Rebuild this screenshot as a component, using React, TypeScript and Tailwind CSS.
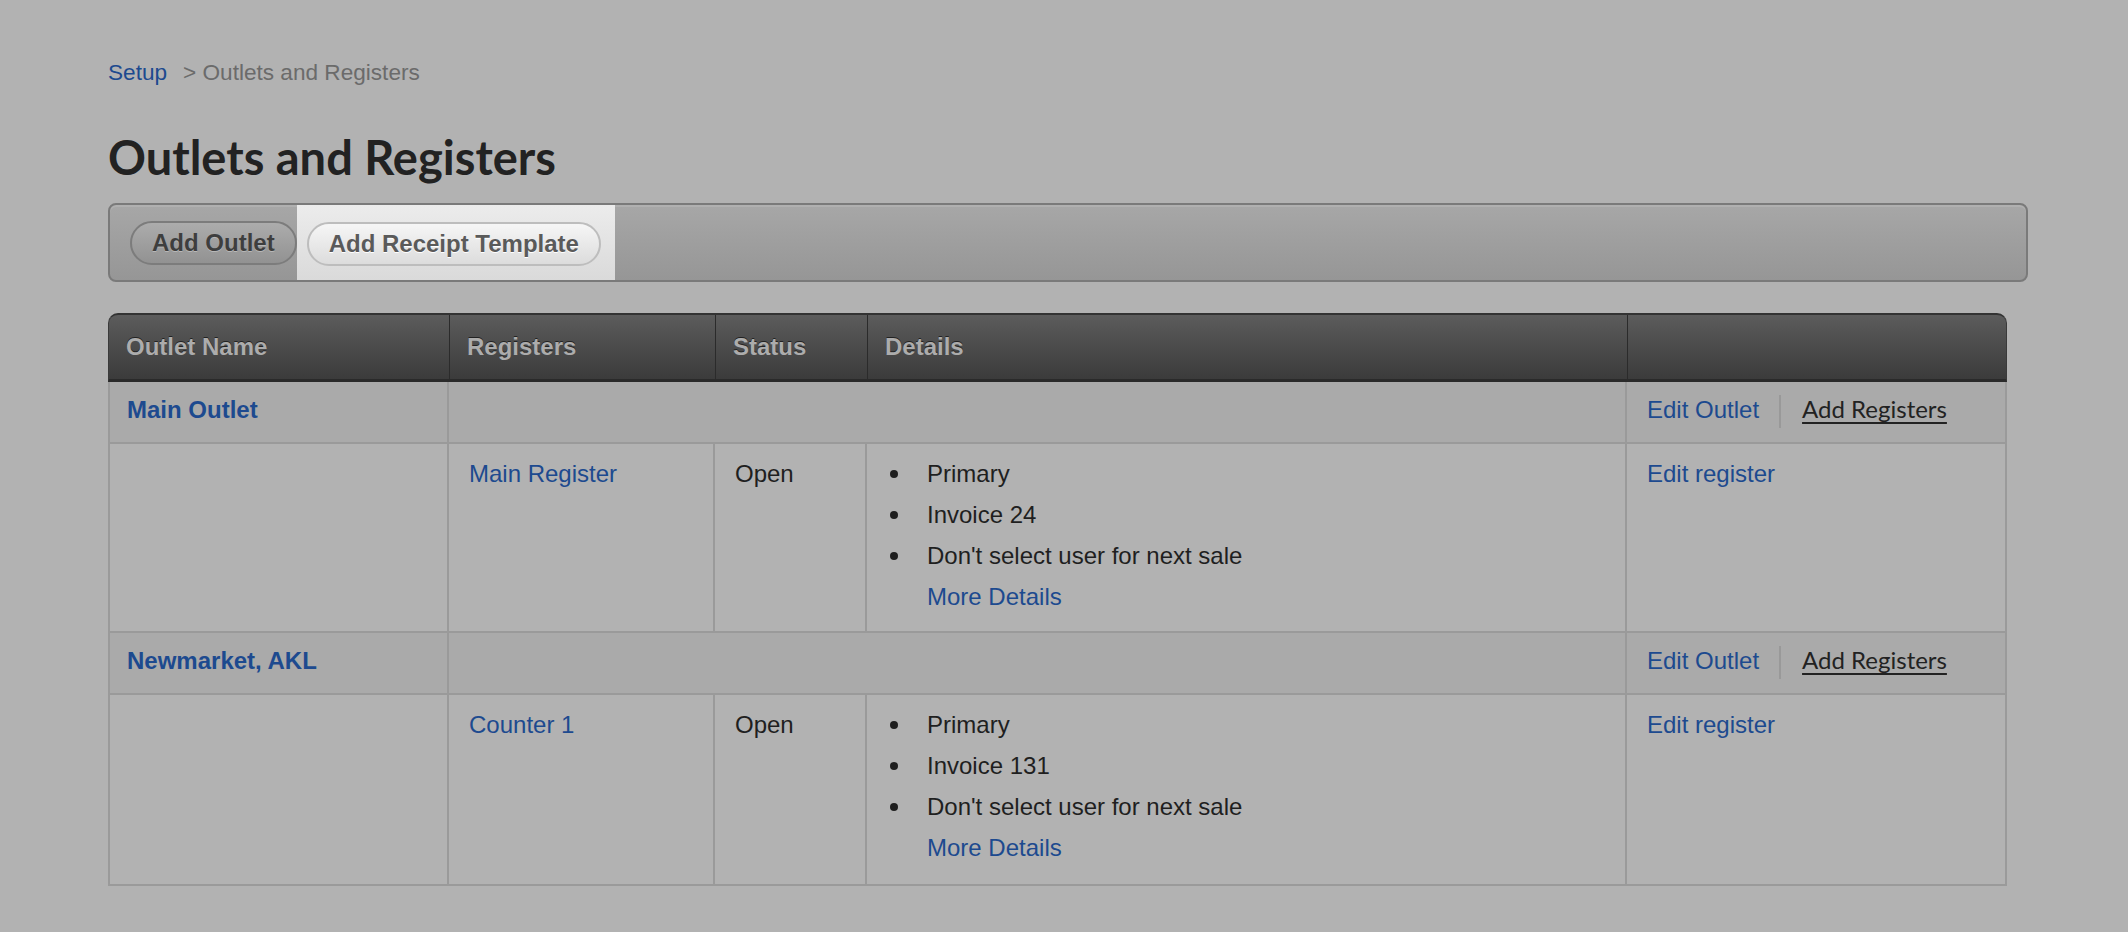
import React from 'react';

const sans = { fontFamily: '"Liberation Sans", Arial, sans-serif' };

type Register = {
  name: string;
  status: string;
  details: string[];
};

type Outlet = {
  name: string;
  registers: Register[];
};

const outlets: Outlet[] = [
  {
    name: 'Main Outlet',
    registers: [
      { name: 'Main Register', status: 'Open', details: ['Primary', 'Invoice 24', "Don't select user for next sale"] },
    ],
  },
  {
    name: 'Newmarket, AKL',
    registers: [
      { name: 'Counter 1', status: 'Open', details: ['Primary', 'Invoice 131', "Don't select user for next sale"] },
    ],
  },
];

const cols = 'grid grid-cols-[339px_266px_152px_760px_378px]';

function OutletRow({ outlet }: { outlet: Outlet }) {
  return (
    <>
      {/* outlet line */}
      <div className={`${cols} bg-[#aaaaaa] border-b-2 border-[#9a9a9a] h-[62px]`}>
        <div className="border-r-2 border-[#9a9a9a] pl-[17px] pt-[7px] leading-[41px] text-[24px] font-bold text-[#1d4a8f]">
          {outlet.name}
        </div>
        <div className="col-span-3 border-r-2 border-[#9a9a9a]" />
        <div className="flex items-start pl-[20px] pt-[7px]">
          <a className="leading-[41px] text-[24px] text-[#1d4a8f]">Edit Outlet</a>
          <span className="ml-[20px] mr-[21px] mt-[6px] h-[33px] w-[2px] bg-[#999999]" />
          <a
            className="leading-[40px] text-[24px] text-[#222] underline underline-offset-[4px]"
            style={{ fontFamily: 'Lato, sans-serif' }}
          >
            Add Registers
          </a>
        </div>
      </div>

      {/* registers */}
      {outlet.registers.map((r) => (
        <div key={r.name} className={`${cols} bg-[#b2b2b2] border-b-2 border-[#9a9a9a] last:border-b-0 h-[189px]`}>
          <div className="border-r-2 border-[#9a9a9a]" />
          <div className="border-r-2 border-[#9a9a9a] pl-[20px] pt-[9px] leading-[41px] text-[24px] text-[#1d4a8f]">
            {r.name}
          </div>
          <div className="border-r-2 border-[#9a9a9a] pl-[20px] pt-[9px] leading-[41px] text-[24px] text-[#1f1f1f]">
            {r.status}
          </div>
          <div className="border-r-2 border-[#9a9a9a] pt-[9px] text-[24px] leading-[41px] text-[#1f1f1f]">
            <ul>
              {r.details.map((d) => (
                <li key={d} className="flex items-center">
                  <span className="ml-[23px] mr-[29px] h-[8px] w-[8px] rounded-full bg-[#1f1f1f]" />
                  {d}
                </li>
              ))}
            </ul>
            <a className="block pl-[60px] text-[#1d4a8f]">More Details</a>
          </div>
          <div className="pl-[20px] pt-[9px] leading-[41px] text-[24px] text-[#1d4a8f]">
            Edit register
          </div>
        </div>
      ))}
    </>
  );
}

export default function App() {
  return (
    <div className="min-h-[932px] bg-[#b2b2b2] pl-[108px] pt-[60px]" style={sans}>
      {/* breadcrumb */}
      <div className="flex items-center gap-[16px] text-[22.6px] leading-[26px]">
        <a className="text-[#1d4a8f]">Setup</a>
        <span className="text-[#6b6b6b]">&gt; Outlets and Registers</span>
      </div>

      <h1
        className="mt-[45px] text-[47px] font-bold leading-[52px] text-[#222]"
        style={{ fontFamily: 'Lato, sans-serif' }}
      >
        Outlets and Registers
      </h1>

      {/* toolbar */}
      <div className="mt-[20px] flex h-[79px] w-[1920px] items-stretch rounded-[8px] border-2 border-[#7a7a7a] bg-gradient-to-b from-[#a7a7a7] to-[#969696] shadow-[inset_0_2px_0_#b0b0b0]">
        <div className="flex items-center pl-[20px]">
          <button className="h-[44px] rounded-full border-2 border-[#7c7c7c] bg-gradient-to-b from-[#acacac] to-[#929292] px-[20px] text-[24px] font-bold text-[#3e3e3e] [text-shadow:0_1px_0_#b8b8b8]">
            Add Outlet
          </button>
        </div>
        <div className="flex items-center bg-gradient-to-b from-[#ececec] to-[#dadada] pl-[10px] pr-[14px] pt-[2px]">
          <button className="h-[44px] rounded-full border-2 border-[#bdbdbd] bg-gradient-to-b from-[#f6f6f6] to-[#dcdcdc] px-[20px] text-[24px] font-bold text-[#5a5a5a] [text-shadow:0_1px_0_#ffffff]">
            Add Receipt Template
          </button>
        </div>
      </div>

      {/* table */}
      <div className="mt-[31px] w-[1899px]">
        <div className="flex h-[69px] rounded-t-[10px] border-t-2 border-b-[3px] border-x border-t-[#333] border-b-[#2a2a2a] border-x-[#3a3a3a] bg-gradient-to-b from-[#5c5c5c] to-[#3b3b3b] text-[24px] font-bold text-[#acacac] [text-shadow:0_-1px_0_#222]">
          <div className="flex w-[341px] items-center border-r border-[#2b2b2b] pl-[17px]">Outlet Name</div>
          <div className="flex w-[266px] items-center border-r border-[#2b2b2b] pl-[17px]">Registers</div>
          <div className="flex w-[152px] items-center border-r border-[#2b2b2b] pl-[17px]">Status</div>
          <div className="flex w-[760px] items-center border-r border-[#2b2b2b] pl-[17px]">Details</div>
          <div className="flex-1" />
        </div>
        <div className="border-2 border-t-0 border-[#9a9a9a]">
          {outlets.map((o) => (
            <OutletRow key={o.name} outlet={o} />
          ))}
        </div>
      </div>
    </div>
  );
}
